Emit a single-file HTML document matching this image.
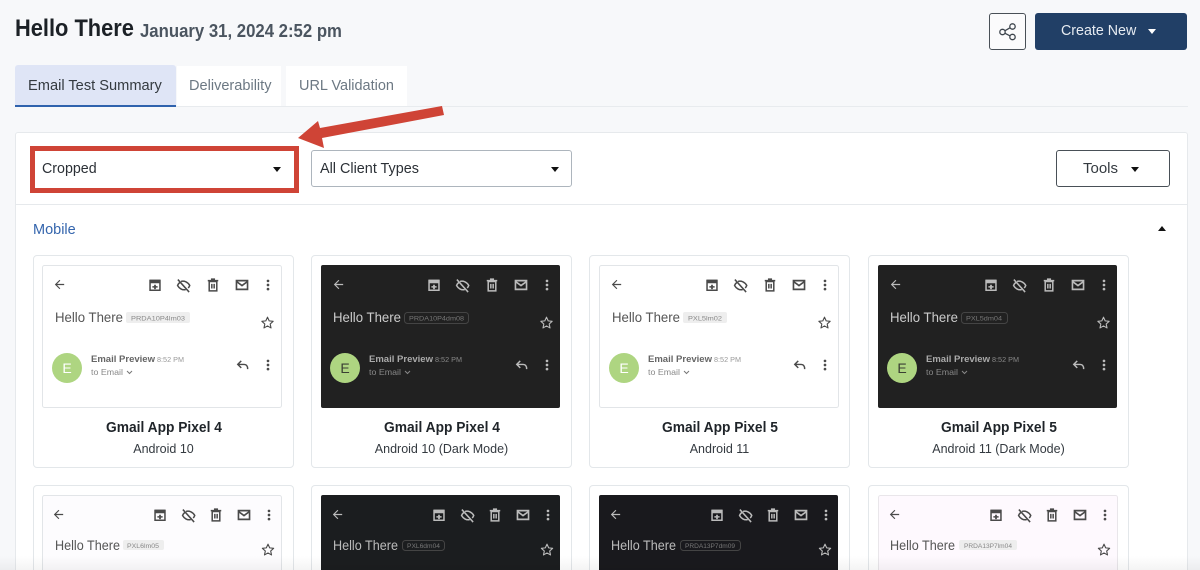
<!DOCTYPE html>
<html><head><meta charset="utf-8"><style>
*{box-sizing:border-box}
html,body{margin:0;padding:0;width:1200px;height:570px;overflow:hidden;background:#f7f8fa}
#w{position:relative;width:1200px;height:570px;overflow:hidden;background:#f7f8fa;font-family:"Liberation Sans",sans-serif;color:#212529;filter:blur(.3px)}
.a{position:absolute}
.t{position:absolute;white-space:nowrap;transform-origin:0 50%}
.caret{position:absolute;width:0;height:0;border-left:4.5px solid transparent;border-right:4.5px solid transparent;border-top:5px solid #111}
.card{position:absolute;width:261px;height:213px;background:#fff;border:1px solid #e3e7ea;border-radius:4px}
.card.b{height:85px;border-bottom:0;border-radius:4px 4px 0 0}
.n{position:absolute;left:-1px;width:261px;text-align:center;white-space:nowrap}
.n span{display:inline-block}
svg.p{position:absolute;left:0;top:0;filter:blur(.35px)}
</style></head><body><div id="w">
<div class="t" style="left:15px;top:15px;font-size:24px;line-height:28px;font-weight:bold;color:#1c2126;transform:scaleX(.91)">Hello There</div>
<div class="t" style="left:140px;top:20px;font-size:18px;line-height:22px;font-weight:bold;color:#4b5560;transform:scaleX(.93)">January 31, 2024 2:52 pm</div>
<div class="a" style="left:989px;top:13px;width:37px;height:37px;border:1px solid #495057;border-radius:3px;background:#fbfbfc"></div>
<svg class="a" style="left:998px;top:22px" width="20" height="20" viewBox="0 0 20 20" fill="none" stroke="#3c444c" stroke-width="1.3"><circle cx="14.5" cy="4.5" r="2.7"/><circle cx="14.5" cy="15" r="2.7"/><circle cx="4.5" cy="10" r="2.7"/><path d="M7 8.7l5.2-3M7 11.3l5.2 2.6"/></svg>
<div class="a" style="left:1035px;top:13px;width:152px;height:37px;background:#213f66;border-radius:3px"></div>
<div class="t" style="left:1061px;top:22px;font-size:15px;line-height:18px;color:#e6ebf1;transform:scaleX(.95)">Create New</div>
<div class="caret" style="left:1148px;top:29px;border-top-color:#fff"></div>

<div class="a" style="left:15px;top:65px;width:161px;height:42px;background:#dfe5f6;border-bottom:2px solid #2f62ad;border-radius:3px 3px 0 0"></div>
<div class="a" style="left:177px;top:66px;width:104px;height:40px;background:#fff"></div>
<div class="a" style="left:286px;top:66px;width:121px;height:40px;background:#fff"></div>
<div class="a" style="left:176px;top:106px;width:1012px;height:1px;background:#e8ebee"></div>
<div class="t" style="left:28px;top:77px;font-size:15px;line-height:18px;color:#343a40;transform:scaleX(.975)">Email Test Summary</div>
<div class="t" style="left:189px;top:77px;font-size:15px;line-height:18px;color:#6c7883;transform:scaleX(.97)">Deliverability</div>
<div class="t" style="left:299px;top:77px;font-size:15px;line-height:18px;color:#6c7883;transform:scaleX(.965)">URL Validation</div>

<div class="a" style="left:15px;top:132px;width:1173px;height:438px;background:#fff;border:1px solid #e6e9ec;border-bottom:0;border-radius:3px 3px 0 0"></div>
<div class="a" style="left:16px;top:204px;width:1171px;height:1px;background:#e6e9ec"></div>

<div class="a" style="left:30px;top:146px;width:269px;height:47px;border:5px solid #cf4436;background:#fff"></div>
<div class="t" style="left:42px;top:160px;font-size:15px;line-height:18px;color:#2b3036;transform:scaleX(.95)">Cropped</div>
<div class="caret" style="left:273px;top:167px"></div>
<div class="a" style="left:311px;top:150px;width:261px;height:37px;border:1px solid #adb5bd;border-radius:3px;background:#fff"></div>
<div class="t" style="left:320px;top:160px;font-size:15px;line-height:18px;color:#2b3036;transform:scaleX(.96)">All Client Types</div>
<div class="caret" style="left:551px;top:167px"></div>
<div class="a" style="left:1056px;top:150px;width:114px;height:37px;border:1px solid #495057;border-radius:3px;background:#fff"></div>
<div class="t" style="left:1083px;top:160px;font-size:15px;line-height:18px;color:#343a40">Tools</div>
<div class="caret" style="left:1131px;top:167px"></div>

<svg class="a" style="left:0;top:0" width="1200" height="200"><path d="M442 106L444 115L322 138L324 148L298 138L318 121L320 128Z" fill="#cf4436"/></svg>

<div class="t" style="left:33px;top:221px;font-size:14.5px;line-height:18px;color:#3465ad">Mobile</div>
<div class="caret" style="left:1158px;top:226px;border-top:0;border-bottom:5px solid #111"></div>

<div class="card" style="left:33px;top:255px"><div class="n" style="top:163px;font-size:14.5px;line-height:18px;font-weight:bold;color:#1f2429"><span style="transform:scaleX(.95)">Gmail App Pixel 4</span></div><div class="n" style="top:185px;font-size:12.5px;line-height:16px;color:#343a40"><span>Android 10</span></div></div>
<div class="card" style="left:311px;top:255px"><div class="n" style="top:163px;font-size:14.5px;line-height:18px;font-weight:bold;color:#1f2429"><span style="transform:scaleX(.95)">Gmail App Pixel 4</span></div><div class="n" style="top:185px;font-size:12.5px;line-height:16px;color:#343a40"><span>Android 10 (Dark Mode)</span></div></div>
<div class="card" style="left:589px;top:255px"><div class="n" style="top:163px;font-size:14.5px;line-height:18px;font-weight:bold;color:#1f2429"><span style="transform:scaleX(.95)">Gmail App Pixel 5</span></div><div class="n" style="top:185px;font-size:12.5px;line-height:16px;color:#343a40"><span>Android 11</span></div></div>
<div class="card" style="left:868px;top:255px"><div class="n" style="top:163px;font-size:14.5px;line-height:18px;font-weight:bold;color:#1f2429"><span style="transform:scaleX(.95)">Gmail App Pixel 5</span></div><div class="n" style="top:185px;font-size:12.5px;line-height:16px;color:#343a40"><span>Android 11 (Dark Mode)</span></div></div>
<div class="card b" style="left:33px;top:485px"></div>
<div class="card b" style="left:311px;top:485px"></div>
<div class="card b" style="left:589px;top:485px"></div>
<div class="card b" style="left:868px;top:485px"></div>

<svg class="p" width="1200" height="570" font-family="'Liberation Sans',sans-serif">
<defs>
<symbol id="back" viewBox="0 0 24 24"><path fill="currentColor" d="M20 11H7.83l5.59-5.59L12 4l-8 8 8 8 1.41-1.41L7.83 13H20v-2z"/></symbol>
<symbol id="arch" viewBox="0 0 24 24"><path fill="none" stroke="currentColor" stroke-width="2.600" d="M3.500 4h17v17h-17z"/><path fill="currentColor" d="M3.500 3h17v6h-17zM10.500 11.500h3v2.500h3v2.500h-3V19h-3v-2.500h-3V14h3z"/></symbol>
<symbol id="eye" viewBox="0 0 24 24"><path fill="none" stroke="currentColor" stroke-width="2.400" d="M3 2.500l18 20M8 5.500c5-1.500 11 1 14 6.500-.6 1.500-1.500 3-2.500 4M15.500 18.500C10 20 5 16.500 2.500 12 3.300 10 4.500 8.500 6 7.200"/></symbol>
<symbol id="trash" viewBox="0 0 24 24"><path fill="none" stroke="currentColor" stroke-width="2.600" d="M5.500 6h13v16h-13zM3 4.500h18M8.500 2h7M10 10v8M14 10v8"/></symbol>
<symbol id="mail" viewBox="0 0 24 24"><path fill="none" stroke="currentColor" stroke-width="2.800" d="M2.500 4.500h19v15h-19zM2.500 6l9.500 7 9.500-7"/></symbol>
<symbol id="dots" viewBox="0 0 24 24"><g fill="currentColor"><circle cx="12" cy="5" r="2.300"/><circle cx="12" cy="12" r="2.300"/><circle cx="12" cy="19" r="2.300"/></g></symbol>
<symbol id="star" viewBox="0 0 24 24"><path fill="none" stroke="currentColor" stroke-width="1.800" stroke-linejoin="round" d="M12 3.500l2.700 5.900 6.300.7-4.700 4.300 1.300 6.300-5.600-3.200-5.600 3.200 1.300-6.300L3 10.100l6.300-.7z"/></symbol>
<symbol id="reply" viewBox="0 0 24 24"><path fill="none" stroke="currentColor" stroke-width="2.500" d="M9 5l-6 6 6 6M3 11h11c4 0 6 3 6 8"/></symbol>

<g id="bar1"><use href="#back" x="10.500" y="12.500" width="14" height="14"/><use href="#arch" x="106" y="13" width="14" height="14"/><use href="#eye" x="134" y="13" width="15" height="15"/><use href="#trash" x="164" y="13" width="14" height="14"/><use href="#mail" x="193" y="13" width="14" height="14"/><use href="#dots" x="219" y="13" width="14" height="14"/><use href="#star" x="218" y="50" width="15" height="15"/><use href="#reply" x="194" y="93" width="14" height="14"/><use href="#dots" x="219" y="93" width="14" height="14"/></g>
<g id="bar2"><use href="#back" x="9.500" y="12.500" width="14" height="14"/><use href="#arch" x="111" y="13" width="14" height="14"/><use href="#eye" x="139" y="13" width="15" height="15"/><use href="#trash" x="167" y="13" width="14" height="14"/><use href="#mail" x="195" y="13" width="14" height="14"/><use href="#dots" x="220" y="13" width="14" height="14"/><use href="#star" x="218.500" y="47" width="15" height="15"/></g>
</defs>

<g transform="translate(42,265)" color="#4a4a4a"><rect x=".5" y=".5" width="239" height="142" rx="2" fill="#fff" stroke="#e2e5e8"/><use href="#bar1"/>
<text x="13" y="57" font-size="13.500" fill="#555" textLength="68" lengthAdjust="spacingAndGlyphs">Hello There</text><rect x="84" y="47" width="64" height="11" rx="2" fill="#eee"/><text x="89" y="55.500" font-size="6.500" fill="#888" textLength="54" lengthAdjust="spacingAndGlyphs">PRDA10P4lm03</text>
<circle cx="25" cy="103" r="15" fill="#aed581"/><text x="25" y="108" font-size="14" fill="#fff" text-anchor="middle">E</text>
<text x="49" y="97" font-size="9" font-weight="bold" fill="#666" textLength="64" lengthAdjust="spacingAndGlyphs">Email Preview</text><text x="115" y="97" font-size="7.500" fill="#999" textLength="27" lengthAdjust="spacingAndGlyphs">8:52 PM</text><text x="49" y="110" font-size="8.500" fill="#888" textLength="32" lengthAdjust="spacingAndGlyphs">to Email</text><path d="M85 106l2.500 2.500 2.500-2.500" fill="none" stroke="#777"/></g>

<g transform="translate(321,265)" color="#bbb"><rect width="239" height="143" rx="2" fill="#212121"/><use href="#bar1"/>
<text x="12" y="57" font-size="13.500" fill="#ccc" textLength="68" lengthAdjust="spacingAndGlyphs">Hello There</text><rect x="83.500" y="47.500" width="64" height="11" rx="3" fill="none" stroke="#444"/><text x="88" y="55.500" font-size="6.500" fill="#777" textLength="55" lengthAdjust="spacingAndGlyphs">PRDA10P4dm08</text>
<circle cx="24" cy="103" r="15" fill="#aed581"/><text x="24" y="108" font-size="14" fill="#3a3f33" text-anchor="middle">E</text>
<text x="48" y="97" font-size="9" font-weight="bold" fill="#aaa" textLength="64" lengthAdjust="spacingAndGlyphs">Email Preview</text><text x="114" y="97" font-size="7.500" fill="#888" textLength="27" lengthAdjust="spacingAndGlyphs">8:52 PM</text><text x="48" y="110" font-size="8.500" fill="#888" textLength="32" lengthAdjust="spacingAndGlyphs">to Email</text><path d="M84 106l2.500 2.500 2.500-2.500" fill="none" stroke="#888"/></g>

<g transform="translate(599,265)" color="#4a4a4a"><rect x=".5" y=".5" width="239" height="142" rx="2" fill="#fff" stroke="#e2e5e8"/><use href="#bar1"/>
<text x="13" y="57" font-size="13.500" fill="#555" textLength="68" lengthAdjust="spacingAndGlyphs">Hello There</text><rect x="84" y="47" width="44" height="11" rx="2" fill="#eee"/><text x="89" y="55.500" font-size="6.500" fill="#888" textLength="34" lengthAdjust="spacingAndGlyphs">PXL5lm02</text>
<circle cx="25" cy="103" r="15" fill="#aed581"/><text x="25" y="108" font-size="14" fill="#fff" text-anchor="middle">E</text>
<text x="49" y="97" font-size="9" font-weight="bold" fill="#666" textLength="64" lengthAdjust="spacingAndGlyphs">Email Preview</text><text x="115" y="97" font-size="7.500" fill="#999" textLength="27" lengthAdjust="spacingAndGlyphs">8:52 PM</text><text x="49" y="110" font-size="8.500" fill="#888" textLength="32" lengthAdjust="spacingAndGlyphs">to Email</text><path d="M85 106l2.500 2.500 2.500-2.500" fill="none" stroke="#777"/></g>

<g transform="translate(878,265)" color="#bbb"><rect width="239" height="143" rx="2" fill="#212121"/><use href="#bar1"/>
<text x="12" y="57" font-size="13.500" fill="#ccc" textLength="68" lengthAdjust="spacingAndGlyphs">Hello There</text><rect x="83.500" y="47.500" width="46" height="11" rx="3" fill="none" stroke="#444"/><text x="88" y="55.500" font-size="6.500" fill="#777" textLength="36" lengthAdjust="spacingAndGlyphs">PXL5dm04</text>
<circle cx="24" cy="103" r="15" fill="#aed581"/><text x="24" y="108" font-size="14" fill="#3a3f33" text-anchor="middle">E</text>
<text x="48" y="97" font-size="9" font-weight="bold" fill="#aaa" textLength="64" lengthAdjust="spacingAndGlyphs">Email Preview</text><text x="114" y="97" font-size="7.500" fill="#888" textLength="27" lengthAdjust="spacingAndGlyphs">8:52 PM</text><text x="48" y="110" font-size="8.500" fill="#888" textLength="32" lengthAdjust="spacingAndGlyphs">to Email</text><path d="M84 106l2.500 2.500 2.500-2.500" fill="none" stroke="#888"/></g>

<g transform="translate(42,495)" color="#4a4a4a"><rect x=".5" y=".5" width="239" height="80" rx="2" fill="#fdfcfe" stroke="#e2e5e8"/><use href="#bar2"/>
<text x="13" y="55" font-size="13.500" fill="#555" textLength="65" lengthAdjust="spacingAndGlyphs">Hello There</text><rect x="81" y="45" width="41" height="10" rx="2" fill="#eee"/><text x="85" y="53" font-size="6.500" fill="#888" textLength="32" lengthAdjust="spacingAndGlyphs">PXL6lm05</text></g>

<g transform="translate(321,495)" color="#bbb"><rect width="239" height="80" rx="2" fill="#1b1d1f"/><use href="#bar2"/>
<text x="12" y="55" font-size="13.500" fill="#bbb" textLength="65" lengthAdjust="spacingAndGlyphs">Hello There</text><rect x="81.500" y="45.500" width="42" height="10" rx="3" fill="none" stroke="#444"/><text x="86" y="53" font-size="6.500" fill="#777" textLength="33" lengthAdjust="spacingAndGlyphs">PXL6dm04</text></g>

<g transform="translate(599,495)" color="#bbb"><rect width="239" height="80" rx="2" fill="#19191d"/><use href="#bar2"/>
<text x="12" y="55" font-size="13.500" fill="#bbb" textLength="65" lengthAdjust="spacingAndGlyphs">Hello There</text><rect x="81.500" y="45.500" width="60" height="10" rx="3" fill="none" stroke="#444"/><text x="86" y="53" font-size="6.500" fill="#777" textLength="50" lengthAdjust="spacingAndGlyphs">PRDA13P7dm09</text></g>

<g transform="translate(878,495)" color="#4a4a4a"><rect x=".5" y=".5" width="239" height="80" rx="2" fill="#fef9fe" stroke="#e9e6ea"/><use href="#bar2"/>
<text x="12" y="55" font-size="13.500" fill="#555" textLength="65" lengthAdjust="spacingAndGlyphs">Hello There</text><rect x="81" y="45" width="58" height="10" rx="2" fill="#eee"/><text x="86" y="53" font-size="6.500" fill="#888" textLength="48" lengthAdjust="spacingAndGlyphs">PRDA13P7lm04</text></g>
</svg>
<div class="a" style="left:0;top:556px;width:1200px;height:14px;background:linear-gradient(#fff,#f4f4f4);mix-blend-mode:multiply"></div>
</div></body></html>
